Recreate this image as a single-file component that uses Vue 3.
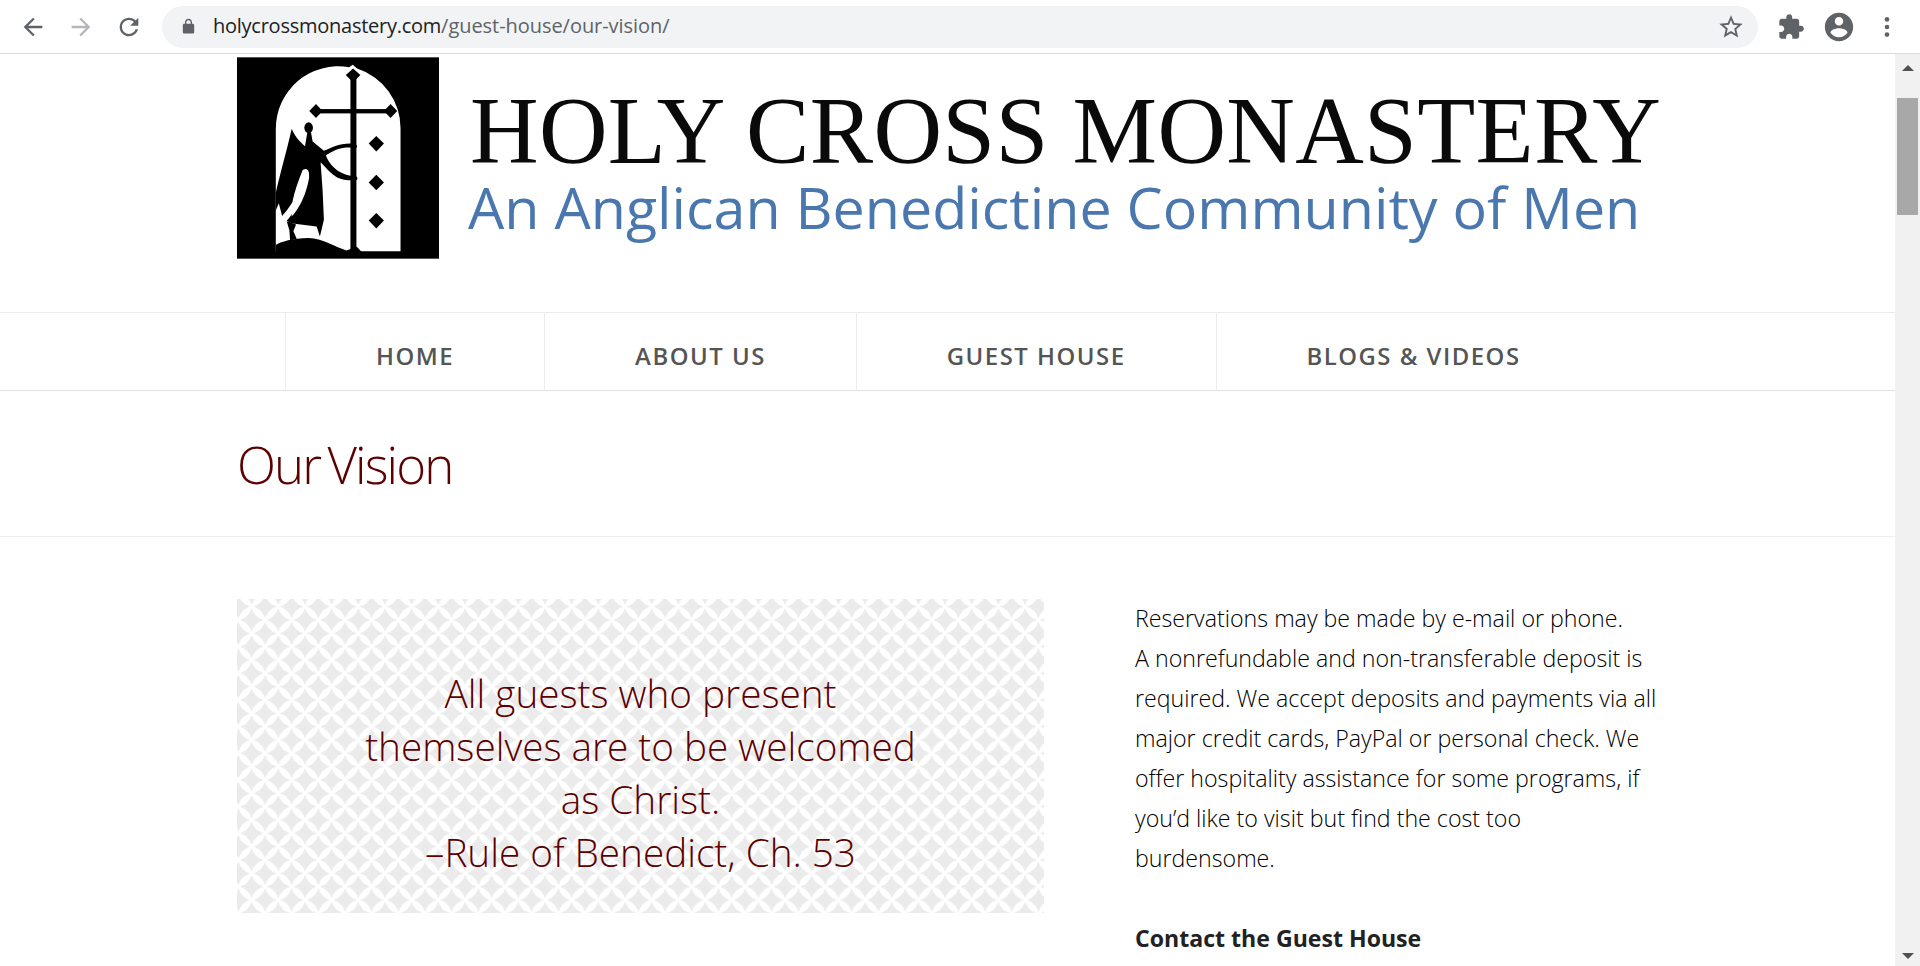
<script setup>
const navItems = ['HOME', 'ABOUT US', 'GUEST HOUSE', 'BLOGS & VIDEOS']
const quoteLines = ['All guests who present', 'themselves are to be welcomed', 'as Christ.', '–Rule of Benedict, Ch. 53']
const bodyLines = [
  'Reservations may be made by e-mail or phone.',
  'A nonrefundable and non-transferable deposit is',
  'required. We accept deposits and payments via all',
  'major credit cards, PayPal or personal check. We',
  'offer hospitality assistance for some programs, if',
  'you’d like to visit but find the cost too',
  'burdensome.'
]
const starPath = 'M0 -11.6Q3 -3 11.6 0Q3 3 0 11.6Q-3 3 -11.6 0Q-3 -3 0 -11.6Z'
const starOffsets = [[0, 0], [26.67, 0], [0, 26.67], [26.67, 26.67], [13.335, 13.335]]
</script>

<template>
  <div class="window">
    <header class="toolbar">
      <svg class="tb-icon back" viewBox="0 0 24 24"><path d="M20 11H7.83l5.59-5.59L12 4l-8 8 8 8 1.41-1.41L7.83 13H20v-2z" /></svg>
      <svg class="tb-icon forward" viewBox="0 0 24 24"><path d="M4 13h12.17l-5.59 5.59L12 20l8-8-8-8-1.41 1.41L16.17 11H4v2z" /></svg>
      <svg class="tb-icon reload" viewBox="0 0 24 24"><path d="M17.65 6.35C16.2 4.9 14.21 4 12 4c-4.42 0-7.99 3.58-7.99 8s3.57 8 7.99 8c3.73 0 6.84-2.55 7.73-6h-2.08c-.82 2.33-3.04 4-5.65 4-3.31 0-6-2.69-6-6s2.69-6 6-6c1.66 0 3.14.69 4.22 1.78L13 11h7V4l-2.35 2.35z" /></svg>
      <div class="omnibox">
        <svg class="lock" viewBox="0 0 24 24"><path d="M18 8h-1V6c0-2.76-2.24-5-5-5S7 3.24 7 6v2H6c-1.1 0-2 .9-2 2v10c0 1.1.9 2 2 2h12c1.1 0 2-.9 2-2V10c0-1.1-.9-2-2-2zM9 6c0-1.66 1.34-3 3-3s3 1.34 3 3v2H9V6z" /></svg>
        <span class="url"><span class="host">holycrossmonastery.com</span><span class="path">/guest-house/our-vision/</span></span>
        <svg class="star" viewBox="0 0 24 24"><path d="M22 9.24l-7.19-.62L12 2 9.19 8.63 2 9.24l5.46 4.73L5.82 21 12 17.27 18.18 21l-1.63-7.03L22 9.24zM12 15.4l-3.76 2.27 1-4.28-3.32-2.88 4.38-.38L12 6.1l1.71 4.04 4.38.38-3.32 2.88 1 4.28L12 15.4z" /></svg>
      </div>
      <svg class="tb-icon puzzle" viewBox="0 0 24 24"><path d="M20.5 11H19V7c0-1.1-.9-2-2-2h-4V3.5C13 2.12 11.88 1 10.5 1S8 2.12 8 3.5V5H4c-1.1 0-1.99.9-1.99 2v3.8H3.5c1.49 0 2.7 1.21 2.7 2.7s-1.21 2.7-2.7 2.7H2V20c0 1.1.9 2 2 2h3.8v-1.5c0-1.49 1.21-2.7 2.7-2.7 1.49 0 2.7 1.21 2.7 2.7V22H17c1.1 0 2-.9 2-2v-4h1.5c1.38 0 2.5-1.12 2.5-2.5S21.88 11 20.5 11z" /></svg>
      <svg class="tb-icon account" viewBox="0 0 24 24"><path d="M12 2C6.48 2 2 6.48 2 12s4.48 10 10 10 10-4.48 10-10S17.52 2 12 2zm0 3c1.66 0 3 1.34 3 3s-1.34 3-3 3-3-1.34-3-3 1.34-3 3-3zm0 14.2c-2.5 0-4.71-1.28-6-3.22.03-1.99 4-3.08 6-3.08 1.99 0 5.97 1.09 6 3.08-1.29 1.94-3.5 3.22-6 3.22z" /></svg>
      <svg class="tb-icon menu" viewBox="0 0 24 24"><circle cx="12" cy="5.5" r="2" /><circle cx="12" cy="12" r="2" /><circle cx="12" cy="18.5" r="2" /></svg>
    </header>

    <div class="viewport">
      <main class="page">
        <div class="brand">
          <svg class="logo" viewBox="0 0 609 607">
            <rect width="609" height="607" fill="#000" />
            <path fill="#fff" d="M117 585V215A188 188 0 0 1 338 30L349 22L362 34A188 188 0 0 1 493 215V585Z" />
            <g fill="#000">
              <rect x="342" y="50" width="18" height="540" />
              <rect x="235" y="156" width="230" height="13" />
              <path d="M350 34L372 53L350 76L328 53Z" />
              <path d="M238 141L258 162L238 183L218 162Z" />
              <path d="M463 141L483 162L463 183L443 162Z" />
              <path d="M420 237L443 260L420 284L397 260Z" />
              <path d="M420 354L443 377L420 401L397 377Z" />
              <path d="M420 469L443 492L420 516L397 492Z" />
              <path d="M117 566C130 556 170 546 215 545C262 547 300 575 330 582C345 580 350 568 362 572L376 587H117Z" />
              <path d="M150 494L178 504L170 524L180 547L160 552L158 522Z" />
              <ellipse cx="216" cy="212" rx="13" ry="16" />
              <path d="M212 226L223 226L228 254L262 282C285 272 310 258 348 260C362 260 364 270 360 273C350 276 345 270 328 272C305 274 285 285 268 295C275 318 300 350 345 358C358 355 366 362 362 369C350 372 322 372 302 362C282 350 268 332 252 316L258 400L262 490L250 540L240 510L162 500L150 492C165 480 178 450 172 430L150 462L136 478L126 440L117 462V408C130 350 148 290 165 215C175 240 192 256 205 268Z" />
            </g>
            <path fill="#fff" d="M198 340C214 330 219 345 217 365C209 410 190 452 165 480C160 440 180 385 198 340Z" />
          </svg>
          <div class="brand-text">
            <div class="brand-name">HOLY CROSS MONASTERY</div>
            <div class="brand-sub">An Anglican Benedictine Community of Men</div>
          </div>
        </div>

        <nav class="nav">
          <a v-for="item in navItems" :key="item" class="nav-item">{{ item }}</a>
        </nav>

        <div class="title-bar">
          <h1 class="title">Our Vision</h1>
        </div>

        <section class="content">
          <div class="quote">
            <svg class="quote-bg" width="100%" height="100%">
              <defs>
                <pattern id="lattice" width="26.67" height="26.67" x="14.7" y="21" patternUnits="userSpaceOnUse">
                  <path
                    v-for="(o, i) in starOffsets"
                    :key="i"
                    :transform="`translate(${o[0]} ${o[1]})`"
                    :d="starPath"
                    fill="#ebebeb"
                  />
                </pattern>
              </defs>
              <rect width="100%" height="100%" fill="url(#lattice)" />
            </svg>
            <p v-for="line in quoteLines" :key="line" class="quote-line">{{ line }}</p>
          </div>
          <div class="details">
            <p v-for="line in bodyLines" :key="line" class="body-line">{{ line }}</p>
            <h2 class="contact">Contact the Guest House</h2>
          </div>
        </section>
      </main>

      <aside class="scrollbar">
        <span class="arrow up"></span>
        <span class="thumb"></span>
        <span class="arrow down"></span>
      </aside>
    </div>
  </div>
</template>

<style>
html, body { margin: 0; overflow: hidden; background: #fff; }
</style>

<style scoped>
.window {
  width: 1920px;
  height: 966px;
  display: flex;
  flex-direction: column;
  overflow: hidden;
  font-family: "Open Sans", sans-serif;
}
.toolbar {
  height: 53px;
  flex: none;
  display: flex;
  align-items: center;
  border-bottom: 1px solid #dadce0;
  box-sizing: content-box;
  background: #fff;
}
.tb-icon { width: 28px; height: 28px; fill: #5f6368; flex: none; }
.back { margin-left: 19px; }
.forward { margin-left: 20px; fill: #b4b6b9; }
.reload { margin-left: 20px; }
.omnibox {
  margin-left: 19px;
  width: 1596px;
  height: 42px;
  border-radius: 21px;
  background: #f1f3f4;
  display: flex;
  align-items: center;
  flex: none;
}
.lock { width: 17px; height: 17px; fill: #5f6368; margin-left: 18px; }
.url { margin-left: 16px; padding-bottom: 2px; font-size: 20px; white-space: nowrap; flex: 1; }
.host { color: #202124; letter-spacing: -0.25px; }
.path { color: #5f6368; letter-spacing: -0.05px; }
.star { width: 28px; height: 28px; fill: #5f6368; margin-right: 13px; }
.puzzle { margin-left: 19px; }
.account { width: 34px; height: 34px; margin-left: 17px; }
.menu { margin-left: 17px; }

.viewport { flex: 1; min-height: 0; display: flex; }
.page { flex: 1; min-width: 0; overflow: hidden; background: #fff; }
.scrollbar {
  width: 25px;
  flex: none;
  background: #f1f1f1;
  display: flex;
  flex-direction: column;
  align-items: center;
  position: relative;
}
.arrow { width: 0; height: 0; border-left: 6px solid transparent; border-right: 6px solid transparent; }
.arrow.up { border-bottom: 6px solid #505050; margin-top: 11px; }
.arrow.down { border-top: 6px solid #505050; margin-top: auto; margin-bottom: 7px; }
.thumb { width: 21px; height: 117px; background: #a8a8a8; margin-top: 27px; }

.brand { display: flex; padding: 3px 0 0 237px; height: 258px; box-sizing: border-box; }
.logo { width: 202px; height: 202px; flex: none; }
.brand-text { margin-left: 29px; padding-top: 34px; white-space: nowrap; }
.brand-name { font-family: "Liberation Serif", serif; font-size: 95px; line-height: 81px; color: #0a0a0a; letter-spacing: 0.3px; margin-left: 2px; }
.brand-sub { font-size: 57.4px; line-height: 70px; color: #4a78ae; }

.nav {
  height: 79px;
  border-top: 1px solid #ececec;
  border-bottom: 1px solid #e2e2e2;
  padding-left: 285px;
  display: flex;
  box-sizing: border-box;
}
.nav-item {
  padding: 7px 90px 0;
  display: flex;
  align-items: center;
  border-left: 1px solid #ececec;
  font-size: 23.9px;
  font-weight: 600;
  letter-spacing: 1.5px;
  color: #555;
  white-space: nowrap;
}
.title-bar { height: 146px; border-bottom: 1px solid #eee; box-sizing: border-box; padding-left: 237px; display: flex; align-items: center; }
.title { margin: 0; font-size: 51px; font-weight: 300; letter-spacing: -1.9px; word-spacing: -4px; color: #5c0000; }

.content { display: flex; padding: 62px 0 0 237px; }
.quote {
  width: 807px;
  height: 314px;
  padding-top: 33px;
  box-sizing: border-box;
  position: relative;
  display: flex;
  flex-direction: column;
  justify-content: center;
  flex: none;
}
.quote-bg { position: absolute; inset: 0; }
.quote-line {
  position: relative;
  margin: 0;
  text-align: center;
  font-size: 38.7px;
  line-height: 53px;
  font-weight: 300;
  color: #5c0000;
}
.details { margin: -1px 0 0 91px; }
.body-line { margin: 0; font-size: 23.2px; line-height: 40px; font-weight: 300; color: #000; white-space: nowrap; }
.contact { margin: 40px 0 0; font-size: 23.1px; font-weight: 700; line-height: 40px; color: #222; }
</style>
